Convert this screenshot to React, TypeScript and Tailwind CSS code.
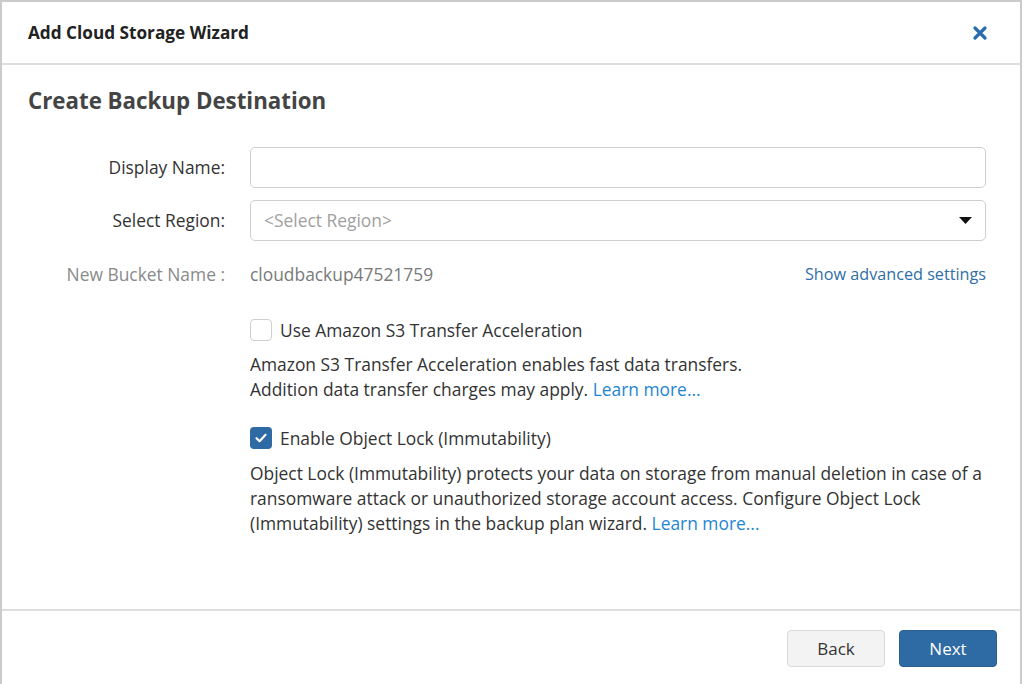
import React from 'react';

const font = { fontFamily: '"Open Sans", "Noto Sans", Arial, sans-serif' };

function CloseIcon() {
  return (
    <svg width="14" height="14" viewBox="0 0 14 14" aria-hidden="true">
      <path d="M2 2 L12 12 M12 2 L2 12" stroke="#2b6cb0" strokeWidth="3.2" strokeLinecap="round" />
    </svg>
  );
}

function Checkbox({ checked }: { checked: boolean }) {
  if (checked) {
    return (
      <span className="flex items-center justify-center w-[22px] h-[22px] rounded-[4px] bg-[#2e6aa3] shrink-0">
        <svg width="14" height="14" viewBox="0 0 14 14" aria-hidden="true">
          <path d="M2.5 7.2 L5.6 10.2 L11.5 3.8" stroke="#fff" strokeWidth="2.2" fill="none" strokeLinecap="round" strokeLinejoin="round" />
        </svg>
      </span>
    );
  }
  return <span className="block w-[22px] h-[22px] rounded-[4px] border border-[#cfcfcf] bg-white shrink-0" />;
}

export default function App() {
  return (
    <div className="w-[1024px] h-[684px] bg-white overflow-hidden" style={font}>
      <div className="w-[1022px] h-[684px] flex flex-col border-l-2 border-t-2 border-r-2 border-[#cbcbcb] bg-white">
        {/* header */}
        <div className="h-[63px] shrink-0 flex items-center justify-between pl-[26px] pr-[33px] border-b-2 border-[#dedede]">
          <span className="text-[17.2px] font-bold text-[#222]">Add Cloud Storage Wizard</span>
          <CloseIcon />
        </div>

        {/* body */}
        <div className="flex-1 pl-[26px] pr-[34px] pt-[21px]">
          <h2 className="text-[22.3px] leading-[30px] font-bold text-[#444]">Create Backup Destination</h2>

          <div className="grid grid-cols-[197px_1fr] gap-x-[25px] mt-[31px] text-[17.4px] text-[#333]">
            <div className="h-[41px] flex items-center justify-end">Display Name:</div>
            <div className="h-[41px] rounded-[5px] border border-[#cfcfcf] bg-white" />

            <div className="h-[41px] mt-[12px] flex items-center justify-end">Select Region:</div>
            <div className="h-[41px] mt-[12px] rounded-[5px] border border-[#cfcfcf] bg-white flex items-center justify-between pl-[13px] pr-[13px]">
              <span className="text-[#a0a0a0]">&lt;Select Region&gt;</span>
              <svg width="13" height="7" viewBox="0 0 13 7" aria-hidden="true">
                <path d="M0 0 H13 L6.5 7 Z" fill="#111" />
              </svg>
            </div>

            <div className="mt-[21px] leading-[25px] text-right text-[#8a8a8a]">New Bucket Name :</div>
            <div className="mt-[21px] leading-[25px] flex justify-between items-center">
              <span className="text-[#7a7a7a]">cloudbackup47521759</span>
              <span className="text-[16.2px] text-[#2f6ea6]">Show advanced settings</span>
            </div>

            <div />
            <div>
              <div className="mt-[32px] flex items-center gap-[8px]">
                <Checkbox checked={false} />
                <span className="leading-[22px]">Use Amazon S3 Transfer Acceleration</span>
              </div>
              <p className="mt-[11px] leading-[25px]">
                Amazon S3 Transfer Acceleration enables fast data transfers.
                <br />
                Addition data transfer charges may apply. <span className="text-[#1f86d1]">Learn more...</span>
              </p>

              <div className="mt-[25px] flex items-center gap-[8px]">
                <Checkbox checked />
                <span className="leading-[22px]">Enable Object Lock (Immutability)</span>
              </div>
              <p className="mt-[12px] leading-[25px]">
                Object Lock (Immutability) protects your data on storage from manual deletion in case of a ransomware attack or unauthorized storage account access. Configure Object Lock (Immutability) settings in the backup plan wizard.{' '}
                <span className="text-[#1f86d1]">Learn more...</span>
              </p>
            </div>
          </div>
        </div>

        {/* footer */}
        <div className="h-[75px] shrink-0 border-t-2 border-[#dedede] flex items-start justify-end gap-[14px] pt-[19px] pr-[23px]">
          <button className="w-[98px] h-[37px] rounded-[4px] border border-[#dadada] bg-[#f3f3f3] text-[17px] text-[#333]">Back</button>
          <button className="w-[98px] h-[37px] rounded-[4px] border border-[#2a5f92] bg-[#2e6aa3] text-[17px] text-white">Next</button>
        </div>
      </div>
    </div>
  );
}
